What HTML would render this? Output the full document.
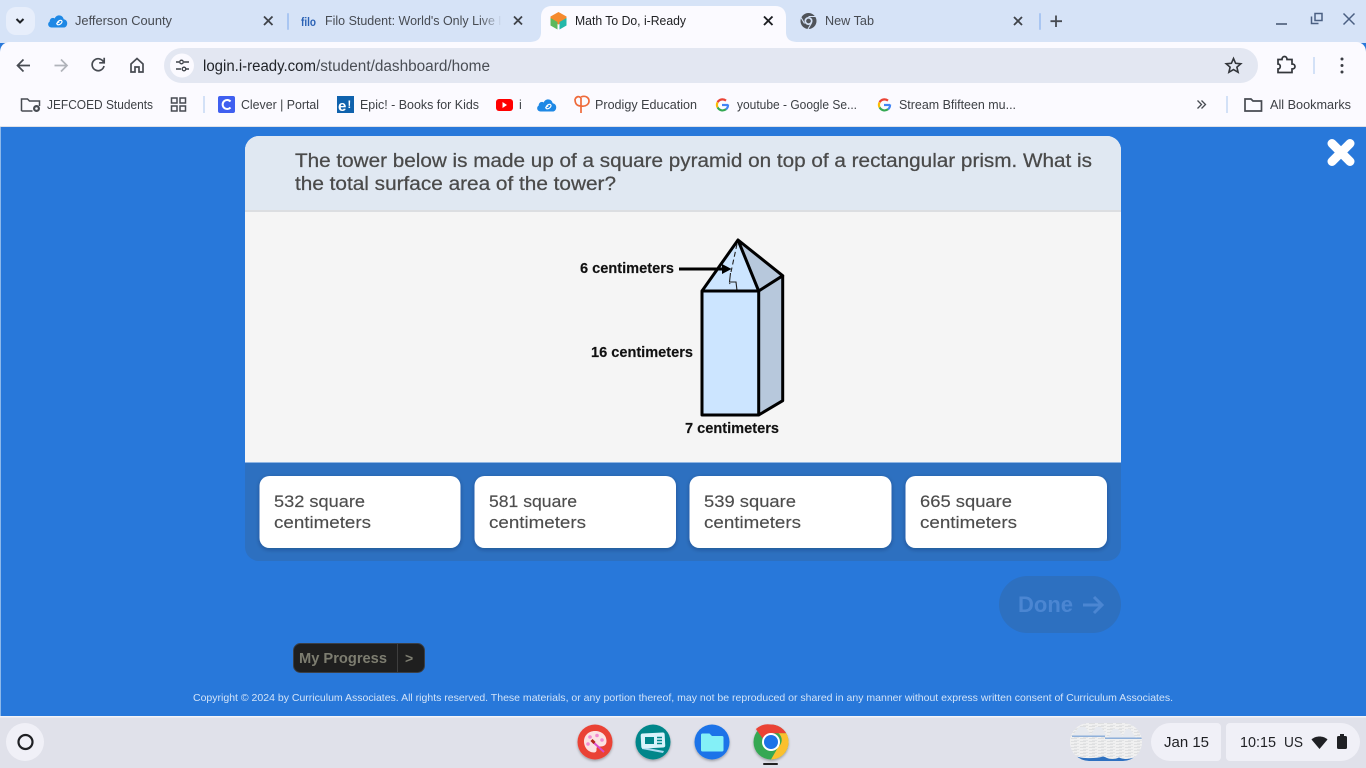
<!DOCTYPE html>
<html><head><meta charset="utf-8"><title>Math To Do, i-Ready</title>
<style>
html,body{margin:0;padding:0;width:1366px;height:768px;overflow:hidden;background:#2878da}
svg{display:block;position:absolute;left:0;top:0}
text{font-family:"Liberation Sans",sans-serif;white-space:pre}
.t{font-size:12.5px;fill:#474b52}
.b{font-size:12.5px;fill:#3d4045}
.q{font-size:19px;fill:#4a4a4a;stroke:#4a4a4a;stroke-width:.25px}
.a{font-size:17px;fill:#4d4d4d;stroke:#4d4d4d;stroke-width:.15px}
.l{font-size:14.5px;font-weight:bold;fill:#111;stroke:#111;stroke-width:.15px}
.i{fill:none;stroke:#474b52;stroke-width:1.7}
</style></head><body>
<svg width="1366" height="768" viewBox="0 0 1366 768" xmlns="http://www.w3.org/2000/svg">
<defs><filter id="sh" x="-10%" y="-10%" width="120%" height="130%"><feDropShadow dx="0" dy="1.5" stdDeviation="2" flood-color="#123" flood-opacity=".3"/></filter>
<filter id="ic" x="-20%" y="-20%" width="140%" height="150%"><feDropShadow dx="0" dy="1.5" stdDeviation="1.3" flood-color="#000" flood-opacity=".3"/></filter>
<linearGradient id="fade" x1="0" x2="1" y1="0" y2="0"><stop offset="0" stop-color="#d6e3f7" stop-opacity="0"/><stop offset="1" stop-color="#d6e3f7"/></linearGradient>
<pattern id="noise" width="9" height="3" patternUnits="userSpaceOnUse"><rect width="9" height="3" fill="#f0f0f0"/><rect x="0" y="0" width="6" height="1" fill="#dedfe0"/><rect x="3" y="2" width="5" height="1" fill="#e3e4e5"/></pattern>
<clipPath id="pod"><rect x="1070" y="723" width="72" height="38" rx="19"/></clipPath></defs>

<!-- page -->
<rect width="1366" height="768" fill="#2878da"/>
<rect x="0" y="127" width="1" height="589" fill="#8db8ea"/>

<!-- tab strip -->
<rect width="1366" height="43" fill="#d6e3f7"/>
<rect x="6" y="7" width="29" height="28" rx="10" fill="#e7eefb"/>
<path d="M16.500 19l3.500 3.500 3.500-3.500" fill="none" stroke="#1f2227" stroke-width="2"/>
<!-- cloud -->
<g id="cloud"><path d="M53 28c-3.500 0-4.500-4.500-1.800-6 0-3 3-4.500 5-3 1.800-4.500 8-4 9 .8 3.800.4 4.500 5 2.300 7.300-.8.7-1.500.9-2.500.9z" fill="#1e88e5" transform="translate(-1.500 -.5)"/><path d="M56.500 24c1-3 4-4.500 5.200-3.200s-1.200 4-3.400 4-1.700-2.300 1.100-2.800" fill="none" stroke="#fff" stroke-width="1.100"/></g>
<text class="t" x="75" y="25" textLength="97" lengthAdjust="spacingAndGlyphs">Jefferson County</text>
<path d="M264 16.500l8.500 8.500M272.500 16.500L264 25" stroke="#3f4349" stroke-width="1.800" fill="none"/>
<rect x="287" y="13" width="2" height="17" rx="1" fill="#a9c6f2"/>
<text x="301" y="26" font-size="12" font-weight="bold" fill="#2b62b5" textLength="15" lengthAdjust="spacingAndGlyphs">filo</text>
<text class="t" x="325" y="25" textLength="170" lengthAdjust="spacingAndGlyphs">Filo Student: World's Only Live</text>
<text class="t" x="498" y="25">I</text>
<rect x="480" y="12" width="22" height="18" fill="url(#fade)"/>
<path d="M514 16.500l8 8M522 16.500l-8 8" stroke="#3f4349" stroke-width="1.800" fill="none"/>

<!-- toolbar -->
<path d="M0 127V52c0-6 4-10 10-10h1346c6 0 10 4 10 10v75z" fill="#fbfaff"/>
<rect y="126" width="1366" height="1" fill="#dfe1e8"/>

<!-- active tab -->
<path d="M529 42c8 0 12-3 12-10V17c0-7 4-11 11-11h223c7 0 11 4 11 11v15c0 7 4 10 12 10v1H529z" fill="#fbfaff"/>
<path d="M558.500 12l8 4.500v4l-8 4-8-4v-4z" fill="#f58a2e"/>
<path d="M550.500 18l7 4v7.500l-7-4z" fill="#5cb85c"/><path d="M566.500 18l-7 4v7.500l7-4z" fill="#23b8a9"/>
<text class="t" x="575" y="25" style="fill:#202124" textLength="111" lengthAdjust="spacingAndGlyphs">Math To Do, i-Ready</text>
<path d="M764 16.500l8.500 8.500M772.500 16.500L764 25" stroke="#1c1e22" stroke-width="1.900" fill="none"/>

<!-- new tab -->
<circle cx="808.500" cy="21" r="8" fill="#50545a"/><circle cx="808.500" cy="21" r="3.200" fill="#50545a" stroke="#d6e3f7" stroke-width="1.700"/>
<path d="M808.500 16.500h7M804.500 23.500l-3.500-6M811.500 23l-3.500 6" stroke="#d6e3f7" stroke-width="1.100" fill="none"/>
<text class="t" x="825" y="25" textLength="49" lengthAdjust="spacingAndGlyphs">New Tab</text>
<path d="M1014 17l8 8M1022 17l-8 8" stroke="#3f4349" stroke-width="1.800" fill="none"/>
<rect x="1039" y="13" width="2" height="17" rx="1" fill="#a9c6f2"/>
<path d="M1056 15.500v11.500M1050.500 21.200h11.500" stroke="#474b52" stroke-width="1.800" fill="none"/>
<path d="M1276 24h11" stroke="#5a6a85" stroke-width="1.800"/>
<path d="M1315 13.500h7v7h-7zM1311.500 16.500v7h7" fill="none" stroke="#4a5f82" stroke-width="1.500"/>
<path d="M1343.500 13.500l11 11M1354.500 13.500l-11 11" stroke="#4a5f82" stroke-width="1.500" fill="none"/>

<!-- nav -->
<path d="M30 65.500H18M23.500 59.500l-6 6 6 6" fill="none" stroke="#474b52" stroke-width="1.700"/>
<path d="M66.500 65.500h-12M61 59.500l6 6-6 6" fill="none" stroke="#b0b3ba" stroke-width="1.700"/>
<path d="M103.500 62a6 6 0 1 0 .5 4M104.200 57.800v5h-5" fill="none" stroke="#474b52" stroke-width="1.700"/>
<path d="M131 64l6-5.500 6 5.500v8h-4v-5h-4v5h-4z" class="i"/>

<rect x="164" y="48" width="1094" height="35" rx="17.500" fill="#e3e7f2"/>
<circle cx="182" cy="65.500" r="12" fill="#fbfaff"/>
<path d="M176 62h3M184 62h5M176 69h5M186 69h3" stroke="#3e4249" stroke-width="1.500" fill="none"/>
<circle cx="181.500" cy="62" r="1.800" fill="none" stroke="#3e4249" stroke-width="1.300"/><circle cx="184" cy="69" r="1.800" fill="none" stroke="#3e4249" stroke-width="1.300"/>
<text x="203" y="71" font-size="15.500" fill="#1f2227" textLength="113" lengthAdjust="spacingAndGlyphs">login.i-ready.com</text>
<text x="316" y="71" font-size="15.500" fill="#4a4e55" textLength="174" lengthAdjust="spacingAndGlyphs">/student/dashboard/home</text>
<path d="M1233.500 58.500l2.100 4.800 5.200.5-3.900 3.400 1.200 5.100-4.600-2.700-4.600 2.700 1.200-5.100-3.900-3.400 5.200-.5z" fill="none" stroke="#33363b" stroke-width="1.600"/>
<path d="M1278 60.500h4c0-4 5-4 5 0h5v4.500c4 0 4 5 0 5v3.500h-14v-3.500c3 0 3-5 0-5z" transform="translate(0 -1)" class="i" style="stroke:#33363b"/>
<rect x="1313" y="57" width="2" height="17" fill="#d3e1f7"/>
<circle cx="1342" cy="59" r="1.500" fill="#3a3d43"/><circle cx="1342" cy="65.500" r="1.500" fill="#3a3d43"/><circle cx="1342" cy="72" r="1.500" fill="#3a3d43"/>

<!-- bookmarks -->
<path d="M21.500 111V99h6l2 2h10v5M21.500 111h11" fill="none" stroke="#474b52" stroke-width="1.500"/>
<circle cx="36.500" cy="108.500" r="3.500" fill="#474b52"/><circle cx="36.500" cy="108.500" r="1.300" fill="#fbfaff"/>
<text class="b" x="47" y="109" textLength="106" lengthAdjust="spacingAndGlyphs">JEFCOED Students</text>
<g fill="none" stroke="#474b52" stroke-width="1.500"><rect x="171.500" y="98" width="5.500" height="5"/><rect x="180" y="98" width="5.500" height="5"/><rect x="171.500" y="106" width="5.500" height="5"/><rect x="180" y="106" width="5.500" height="5"/></g>
<rect x="203" y="96" width="2" height="17" fill="#d3e1f7"/>
<rect x="218" y="96" width="17" height="17" rx="2" fill="#3f5ff0"/>
<path d="M230.500 101.500a4.500 4.500 0 1 0 0 6" fill="none" stroke="#fff" stroke-width="2"/>
<text class="b" x="241" y="109" textLength="78" lengthAdjust="spacingAndGlyphs">Clever | Portal</text>
<rect x="337" y="96" width="17" height="17" fill="#0f62ad"/>
<text x="338" y="111" font-size="15" font-weight="bold" fill="#fff">e</text><text x="347.500" y="108" font-size="11" font-weight="bold" fill="#fff">!</text>
<text class="b" x="360" y="109" textLength="119" lengthAdjust="spacingAndGlyphs">Epic! - Books for Kids</text>
<rect x="496" y="99" width="17" height="12" rx="3" fill="#f00"/><path d="M502.500 102l4.500 3-4.500 3z" fill="#fff"/>
<text class="b" x="519" y="109">i</text>
<use href="#cloud" transform="translate(489 84)"/>
<path d="M581 113V98M575 99c0 5 2 7 6 7M575 99c2-3 4-3 6-1M581 97c5-2 8 1 8 4s-3 6-8 5" fill="none" stroke="#ee6a3a" stroke-width="1.700"/>
<text class="b" x="595" y="109" textLength="102" lengthAdjust="spacingAndGlyphs">Prodigy Education</text>
<g id="g1" fill="none" stroke-width="2.200"><path d="M728 105h-6" stroke="#4285f4"/><path d="M728 104.500a5.500 5.500 0 0 1-2 4.800" stroke="#4285f4"/><path d="M726 109.300a5.700 5.700 0 0 1-8.400-1.900" stroke="#34a853"/><path d="M717.600 107.400a5.700 5.700 0 0 1 0-5.200" stroke="#fbbc05"/><path d="M717.600 102.200a5.700 5.700 0 0 1 8.400-1.600" stroke="#ea4335"/></g>
<text class="b" x="737" y="109" textLength="120" lengthAdjust="spacingAndGlyphs">youtube - Google Se...</text>
<use href="#g1" transform="translate(162)"/>
<text class="b" x="899" y="109" textLength="117" lengthAdjust="spacingAndGlyphs">Stream Bfifteen mu...</text>
<path d="M1197.500 100.500l4 4-4 4M1201.500 100.500l4 4-4 4" fill="none" stroke="#474b52" stroke-width="1.300"/>
<rect x="1226" y="96" width="2" height="17" fill="#d3e1f7"/>
<path d="M1245 111V99h6l2 2h8.500v10z" class="i"/>
<text class="b" x="1270" y="109" textLength="81" lengthAdjust="spacingAndGlyphs">All Bookmarks</text>

<!-- close -->
<path d="M1332 143.500l18 18M1350 143.500l-18 18" stroke="#fff" stroke-width="9" stroke-linecap="round" fill="none"/>

<!-- card -->
<path d="M245 462V150a14 14 0 0 1 14-14h848a14 14 0 0 1 14 14v312z" fill="#f5f5f5"/>
<path d="M245 210V150a14 14 0 0 1 14-14h848a14 14 0 0 1 14 14v60z" fill="#e0e8f2"/>
<rect x="245" y="210" width="876" height="2" fill="#dcdee1"/>
<text class="q" x="295" y="167" textLength="797" lengthAdjust="spacingAndGlyphs">The tower below is made up of a square pyramid on top of a rectangular prism. What is</text>
<text class="q" x="295" y="190" textLength="321" lengthAdjust="spacingAndGlyphs">the total surface area of the tower?</text>

<!-- diagram -->
<path d="M738 240L758.700 291l24-15.300z" fill="#b7c8dc"/>
<path d="M738 240L702 291h56.700z" fill="#cce5ff"/>
<path d="M758.700 291l24-15.300v125l-24 14.300z" fill="#b7c8dc"/>
<rect x="702" y="291" width="56.700" height="124" fill="#cce5ff"/>
<path d="M737 244L731 272M730 283l-.5 1" fill="none" stroke="#222" stroke-width="1.100" stroke-dasharray="5 3"/>
<path d="M730.500 273l-1 9h6.500l1 8.500" fill="none" stroke="#222" stroke-width="1.100"/>
<g fill="none" stroke="#000" stroke-width="3" stroke-linejoin="round">
<path d="M702 291L738 240L782.700 275.700L758.700 291M738 240L758.700 291"/>
<path d="M702 291h56.700V415H702zM758.700 415l24-14.300V275.700"/>
</g>
<path d="M679 269h46" stroke="#000" stroke-width="3"/><path d="M722 264l9.500 5-9.500 5z" fill="#000"/>
<text class="l" x="580" y="273" textLength="94" lengthAdjust="spacingAndGlyphs">6 centimeters</text>
<text class="l" x="591" y="357" textLength="102" lengthAdjust="spacingAndGlyphs">16 centimeters</text>
<text class="l" x="685" y="433" textLength="94" lengthAdjust="spacingAndGlyphs">7 centimeters</text>

<!-- answers -->
<path d="M245 462h876v85a14 14 0 0 1-14 14H259a14 14 0 0 1-14-14z" fill="#2d70c0"/>
<rect x="245" y="462" width="876" height="1" fill="#8fb5e3"/>
<g fill="#fff" filter="url(#sh)">
<rect x="259.500" y="476" width="201" height="72" rx="10"/>
<rect x="474.500" y="476" width="201.500" height="72" rx="10"/>
<rect x="689.500" y="476" width="202" height="72" rx="10"/>
<rect x="905.500" y="476" width="201.500" height="72" rx="10"/>
</g>
<text class="a" x="274" y="507" textLength="91" lengthAdjust="spacingAndGlyphs">532 square</text>
<text class="a" x="274" y="528" textLength="97" lengthAdjust="spacingAndGlyphs">centimeters</text>
<text class="a" x="489" y="507" textLength="88" lengthAdjust="spacingAndGlyphs">581 square</text>
<text class="a" x="489" y="528" textLength="97" lengthAdjust="spacingAndGlyphs">centimeters</text>
<text class="a" x="704" y="507" textLength="92" lengthAdjust="spacingAndGlyphs">539 square</text>
<text class="a" x="704" y="528" textLength="97" lengthAdjust="spacingAndGlyphs">centimeters</text>
<text class="a" x="920" y="507" textLength="92" lengthAdjust="spacingAndGlyphs">665 square</text>
<text class="a" x="920" y="528" textLength="97" lengthAdjust="spacingAndGlyphs">centimeters</text>

<!-- done -->
<rect x="999" y="576" width="122" height="57" rx="28.500" fill="#2d70c0"/>
<text x="1018" y="612" font-size="22" font-weight="bold" fill="#4b86d2" textLength="55" lengthAdjust="spacingAndGlyphs">Done</text>
<path d="M1083 605h18M1094 597l8 8-8 8" fill="none" stroke="#4b86d2" stroke-width="3"/>

<!-- progress -->
<rect x="293.500" y="643.500" width="131" height="29" rx="7" fill="#1f1f1f" stroke="#3a3f47"/>
<rect x="397" y="644" width="1" height="28" fill="#3e3e3e"/>
<text x="299" y="663" font-size="15" font-weight="bold" fill="#7d7d70" textLength="88" lengthAdjust="spacingAndGlyphs">My Progress</text>
<text x="405" y="663" font-size="14" font-weight="bold" fill="#7d7d70">&gt;</text>

<text x="193" y="701" font-size="10.500" fill="#d2e3f8" textLength="980" lengthAdjust="spacingAndGlyphs">Copyright © 2024 by Curriculum Associates. All rights reserved. These materials, or any portion thereof, may not be reproduced or shared in any manner without express written consent of Curriculum Associates.</text>

<!-- shelf -->
<rect y="716" width="1366" height="52" fill="#e0e1ea"/>
<rect y="716" width="1366" height="1.500" fill="#f2f3f8"/>
<circle cx="25" cy="742" r="19" fill="#f0f0f7"/>
<circle cx="25.500" cy="742" r="7" fill="none" stroke="#1f2024" stroke-width="2.200"/>

<g filter="url(#ic)">
<circle cx="595" cy="742" r="17.500" fill="#ea4335"/>
<path d="M595 731c-7 0-11 5-11 10.500s4 11 10 11c3 0 2.500-3 2.500-4 0-2 2-2 4-2 4 0 6-2 6-5.500 0-6-5-10-11.500-10z" fill="#fbe3e3"/>
<circle cx="590" cy="737" r="1.800" fill="#f28ad0"/><circle cx="597" cy="735.500" r="1.800" fill="#f28ad0"/><circle cx="602" cy="740" r="1.800" fill="#f28ad0"/><circle cx="588" cy="744" r="1.800" fill="#f28ad0"/>
<path d="M593 742l11 10" stroke="#d94ccb" stroke-width="2"/><path d="M591.500 740l3 3" stroke="#b3261e" stroke-width="3"/>

<circle cx="653" cy="742" r="17.500" fill="#00868a"/>
<path d="M642 747l22 4-1 2-21-4z" fill="#a9d8ee"/>
<rect x="641" y="733" width="24" height="15" rx="2" fill="#d9f3fb" transform="rotate(-3 653 741)"/>
<rect x="645" y="737" width="9" height="7" fill="#00868a"/><path d="M657 737.500h5M657 740.500h5M657 743.500h5" stroke="#00868a" stroke-width="1.500"/>

<circle cx="712" cy="742" r="17.500" fill="#1a73e8"/>
<path d="M701 735a1.500 1.500 0 0 1 1.500-1.500h7l2.500 2.500h10a1.500 1.500 0 0 1 1.500 1.500V750a1.500 1.500 0 0 1-1.500 1.500h-19.500A1.500 1.500 0 0 1 701 750z" fill="#84f0f7"/>

<circle cx="771" cy="742" r="17.500" fill="#34a853"/>
<path d="M771 724.500a17.500 17.500 0 0 1 15.200 8.750H771a8.700 8.700 0 0 0-8.100 5.600l-7-9.800A17.500 17.500 0 0 1 771 724.500z" fill="#ea4335"/>
<path d="M786.200 733.250A17.500 17.500 0 0 1 771 759.500l7.200-12.500a8.700 8.700 0 0 0 .3-13.750z" fill="#fbc02d"/>
<circle cx="771" cy="742" r="9" fill="#fff"/><circle cx="771" cy="742" r="7" fill="#1a73e8"/>
</g>
<rect x="763" y="763" width="15" height="2" rx="1" fill="#222"/>

<!-- pod -->
<rect x="1070" y="723" width="72" height="38" rx="19" fill="#f2f3f8"/>
<g clip-path="url(#pod)">
<rect x="1070" y="723" width="72" height="38" fill="url(#noise)"/>
<path d="M1072 736l7-9h6l7 9zM1090 736l6-9h5l6 9zM1108 738l5-9h5l6 9zM1122 738l4-9h4l6 9z" fill="#e6e9ef"/>
<rect x="1072" y="735.500" width="33" height="1.500" fill="#8fb0da"/><rect x="1105" y="737.500" width="37" height="1.500" fill="#8fb0da"/>
<path d="M1075 756c6 2.500 20 3 28 .5l2 .5c4 2.500 10 2.500 14 .5 4 2 9 2 15 0l-3 4h-55z" fill="#2d70c0"/>
</g>

<path d="M1170 723h47a4 4 0 0 1 4 4v30a4 4 0 0 1-4 4h-47a19 19 0 0 1 0-38z" fill="#f0f0f7"/>
<text x="1164" y="747" font-size="15" fill="#1f2024" textLength="45" lengthAdjust="spacingAndGlyphs">Jan 15</text>
<path d="M1230 723h111a19 19 0 0 1 0 38h-111a4 4 0 0 1-4-4v-30a4 4 0 0 1 4-4z" fill="#f0f0f7"/>
<text x="1240" y="747" font-size="15" fill="#1f2024" textLength="36" lengthAdjust="spacingAndGlyphs">10:15</text>
<text x="1284" y="747" font-size="15" fill="#1f2024" textLength="19" lengthAdjust="spacingAndGlyphs">US</text>
<path d="M1311.500 739.500c4-4 12-4 16 0l-8 9.500z" fill="#1f2024"/>
<rect x="1337" y="736" width="10" height="13" rx="1.500" fill="#1f2024"/><rect x="1340" y="734" width="4" height="2" fill="#1f2024"/>
</svg>
</body></html>
